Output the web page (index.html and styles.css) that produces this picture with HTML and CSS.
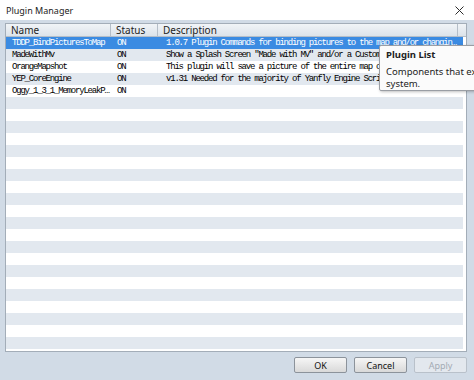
FILE: index.html
```html
<!DOCTYPE html>
<html lang="en">
<head>
	<meta charset="UTF-8" />
	<title>Plugin Manager</title>
	<link rel="stylesheet" href="styles.css">
</head>
<body>
	<div class="window">
		<div class="titlebar">
			<span class="caption">Plugin Manager</span>
			<svg class="close" width="9" height="9" viewBox="0 0 9 9"><path d="M0.5 0.5 L8.5 8.5 M8.5 0.5 L0.5 8.5" stroke="#2b2b2b" stroke-width="1" /></svg>
		</div>
		<div class="content">
			<div class="list">
				<div class="head">
					<div class="col name">Name</div>
					<div class="col status">Status</div>
					<div class="col desc">Description</div>
					<div class="col corner"></div>
				</div>
				<div class="rows">
					<div class="row selected">
						<div class="cell name">TDDP_BindPicturesToMap</div>
						<div class="cell status">ON</div>
						<div class="cell desc">1.0.7 Plugin Commands for binding pictures to the map and/or changing picture layer.</div>
					</div>
					<div class="row">
						<div class="cell name">MadeWithMv</div>
						<div class="cell status">ON</div>
						<div class="cell desc">Show a Splash Screen "Made with MV" and/or a Custom Splash Image before going to main screen.</div>
					</div>
					<div class="row">
						<div class="cell name">OrangeMapshot</div>
						<div class="cell status">ON</div>
						<div class="cell desc">This plugin will save a picture of the entire map on a Mapshots folder.</div>
					</div>
					<div class="row">
						<div class="cell name">YEP_CoreEngine</div>
						<div class="cell status">ON</div>
						<div class="cell desc">v1.31 Needed for the majority of Yanfly Engine Scripts.</div>
					</div>
					<div class="row">
						<div class="cell name">Oggy_1_3_1_MemoryLeakPatch</div>
						<div class="cell status">ON</div>
						<div class="cell desc"></div>
					</div>
					<div class="row"></div><div class="row"></div><div class="row"></div><div class="row"></div>
					<div class="row"></div><div class="row"></div><div class="row"></div><div class="row"></div>
					<div class="row"></div><div class="row"></div><div class="row"></div><div class="row"></div>
					<div class="row"></div><div class="row"></div><div class="row"></div><div class="row"></div>
					<div class="row"></div><div class="row"></div><div class="row"></div><div class="row"></div>
					<div class="row"></div><div class="row"></div><div class="row"></div>
				</div>
			</div>
		</div>
		<div class="footer">
			<button class="btn">OK</button>
			<button class="btn">Cancel</button>
			<button class="btn" disabled>Apply</button>
		</div>

		<div class="tooltip">
			<div class="tip_title">Plugin List</div>
			<div class="tip_text">Components that extend the RPG Maker MV<br>system.</div>
		</div>
	</div>
</body>
</html>
```

FILE: styles.css
```css
body{
	margin: 0;
	font-family: "Noto Sans", sans-serif;
}

.window{
	position: relative;
	width: 474px;
	height: 380px;
	overflow: hidden;
	background-color: #d1dbe6;
	display: flex;
	flex-direction: column;
}

.titlebar{
	height: 20px;
	background-color: #fff;
	display: flex;
	align-items: center;
	justify-content: space-between;
	padding: 0 10px 0 6px;
	flex: none;
}

.caption{
	font-size: 9px;
	color: #222;
}

.content{
	padding: 3px 7px 0 5px;
}

.list{
	height: 327px;
	border: 1px solid #a3adb8;
	background-color: #fff;
	overflow: hidden;
}

.head{
	display: flex;
	height: 13px;
	box-sizing: border-box;
	background: linear-gradient(#f1f4f7, #dce3ea);
	border-bottom: 1px solid #b5bec8;
	font-size: 10px;
	color: #1e1e1e;
}

.col{
	line-height: 12px;
	border-right: 1px solid #b5bec8;
	padding-left: 5px;
	box-sizing: border-box;
	flex: none;
}

.name{ width: 105px; }
.status{ width: 47px; }
.desc{ width: 300px; }
.corner{ width: 9px; border-right: none; }

.row{
	display: flex;
	height: 12px;
	margin-right: 3px;
	font-family: "Liberation Mono", monospace;
	font-size: 9px;
	letter-spacing: -1.2px;
	color: #000;
}

.row:nth-child(even){
	background-color: #e2e8ef;
}

.row.selected{
	background-color: #3b8be2;
	color: #fff;
}

.cell{
	line-height: 12px;
	padding-left: 6px;
	box-sizing: border-box;
	flex: none;
	overflow: hidden;
	white-space: nowrap;
	text-overflow: ellipsis;
}

.cell.desc{ padding-left: 8px; width: 301px; }

.footer{
	display: flex;
	justify-content: flex-end;
	gap: 7px;
	padding: 5px 7px 0 0;
}

.btn{
	width: 53px;
	height: 16px;
	padding: 0;
	font-family: "Noto Sans", sans-serif;
	font-size: 9px;
	color: #111;
	background: linear-gradient(#f6f6f6, #d9d9d9);
	border: 1px solid #8c939b;
	border-radius: 2px;
}

.btn:disabled{
	color: #a3abb4;
	background: #e3e8ee;
	border-color: #b9c1ca;
}

.tooltip{
	position: absolute;
	left: 379px;
	top: 45px;
	width: 140px;
	height: 46px;
	box-sizing: border-box;
	padding: 2px 6px;
	background-color: #fbfbfb;
	border: 1px solid #9a9ea4;
	border-radius: 2px;
	box-shadow: 1px 1px 3px rgba(0, 0, 0, 0.25);
	font-size: 9.5px;
	color: #222;
	white-space: nowrap;
}

.tip_title{
	font-weight: bold;
	font-size: 9.5px;
	line-height: 13px;
	margin-bottom: 5px;
}

.tip_text{
	line-height: 12px;
}
```
